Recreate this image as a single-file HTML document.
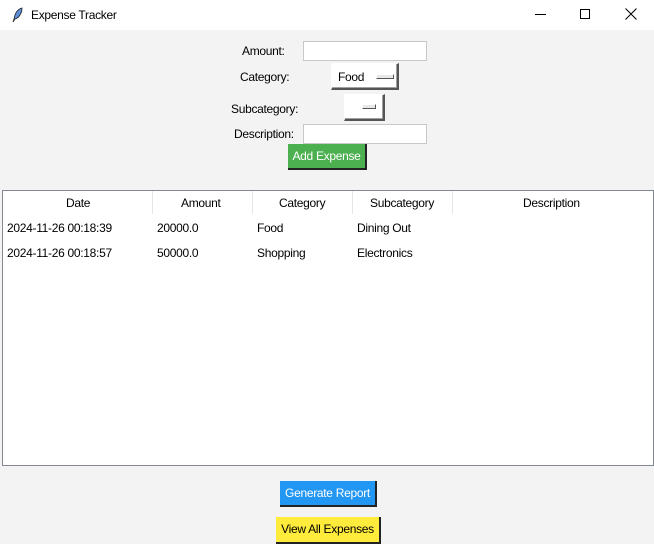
<!DOCTYPE html>
<html><head><meta charset="utf-8"><style>
*{margin:0;padding:0;box-sizing:border-box}
body{width:654px;height:544px;background:#f3f3f3;font-family:"Liberation Sans",sans-serif;font-size:12px;letter-spacing:-0.3px;color:#000;position:relative;overflow:hidden}
.a{position:absolute;white-space:nowrap}
.entry{position:absolute;background:#fff;border:1px solid #c8c8c8;height:20px}
.mb{position:absolute;background:#fff;border:1px solid #fff;border-right:2px solid #555;border-bottom:2px solid #555;box-shadow:inset -1px -1px 0 #a0a0a0}
.ind{position:absolute;width:18px;height:5px;border:1px solid #555;border-top-color:#fff;border-left-color:#fff;background:#e8e8e8}
.btn{position:absolute;border-right:2px solid #222;border-bottom:2px solid #222;text-align:center}
</style></head><body>
<div class="a" style="left:0;top:0;width:654px;height:30px;background:#fff"></div>
<svg class="a" style="left:12px;top:7px" width="12" height="16" viewBox="0 0 12 16"><path d="M10 1 C6 2 3 6 2 12 L1 15 L3 12 C7 11 10 6 10 1Z" fill="#5b8fd6" stroke="#222" stroke-width="0.8"/></svg>
<div class="a" style="left:31px;top:8px">Expense Tracker</div>
<div class="a" style="left:535px;top:14px;width:11px;height:1px;background:#000"></div>
<div class="a" style="left:580px;top:9px;width:10px;height:10px;border:1px solid #000"></div>
<svg class="a" style="left:625px;top:8px" width="12" height="12"><path d="M0.5 0.5L11.5 11.5M11.5 0.5L0.5 11.5" stroke="#000" stroke-width="1"/></svg>

<div class="a" style="left:242px;top:44px">Amount:</div>
<div class="entry" style="left:303px;top:41px;width:124px"></div>
<div class="a" style="left:240px;top:70px">Category:</div>
<div class="mb" style="left:331px;top:63px;width:68px;height:27px"></div>
<div class="a" style="left:338px;top:70px">Food</div>
<div class="ind" style="left:376px;top:74px"></div>
<div class="a" style="left:231px;top:102px">Subcategory:</div>
<div class="mb" style="left:344px;top:94px;width:41px;height:27px"></div>
<div class="ind" style="left:362px;top:104px;width:14px"></div>
<div class="a" style="left:234px;top:127px">Description:</div>
<div class="entry" style="left:303px;top:124px;width:124px"></div>
<div class="btn" style="left:288px;top:144px;width:79px;height:26px;background:#4caf50;color:#fff;line-height:24px">Add Expense</div>

<div class="a" style="left:2px;top:190px;width:652px;height:276px;background:#fff;border:1px solid #828790"></div>
<div class="a" style="left:3px;top:191px;width:650px;height:23px;background:#fff"></div>
<div class="a" style="left:152px;top:191px;width:1px;height:23px;background:#e5e5e5"></div>
<div class="a" style="left:252px;top:191px;width:1px;height:23px;background:#e5e5e5"></div>
<div class="a" style="left:352px;top:191px;width:1px;height:23px;background:#e5e5e5"></div>
<div class="a" style="left:452px;top:191px;width:1px;height:23px;background:#e5e5e5"></div>
<div class="a" style="left:66px;top:196px">Date</div>
<div class="a" style="left:181px;top:196px">Amount</div>
<div class="a" style="left:279px;top:196px">Category</div>
<div class="a" style="left:370px;top:196px">Subcategory</div>
<div class="a" style="left:523px;top:196px">Description</div>
<div class="a" style="left:7px;top:221px">2024-11-26 00:18:39</div>
<div class="a" style="left:157px;top:221px">20000.0</div>
<div class="a" style="left:257px;top:221px">Food</div>
<div class="a" style="left:357px;top:221px">Dining Out</div>
<div class="a" style="left:7px;top:246px">2024-11-26 00:18:57</div>
<div class="a" style="left:157px;top:246px">50000.0</div>
<div class="a" style="left:257px;top:246px">Shopping</div>
<div class="a" style="left:357px;top:246px">Electronics</div>

<div class="btn" style="left:280px;top:481px;width:97px;height:26px;background:#2196f3;color:#fff;line-height:24px">Generate Report</div>
<div class="btn" style="left:276px;top:517px;width:105px;height:27px;background:#ffeb3b;color:#000;line-height:25px">View All Expenses</div>
</body></html>
